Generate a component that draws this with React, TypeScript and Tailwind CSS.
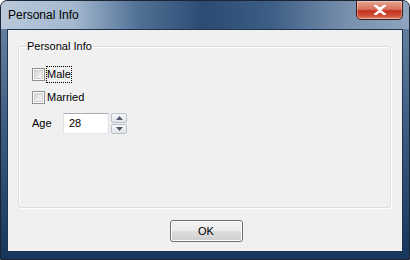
import * as React from "react";

const font = { fontFamily: '"Liberation Sans", Arial, sans-serif' };

const CheckBox: React.FC<{ label: string; focused?: boolean }> = ({ label, focused }) => (
  <div className="flex h-[17px] items-center gap-[1px]">
    <div className="h-[13px] w-[13px] border border-[#8e8f8f] bg-white p-[1px]">
      <div className="h-full w-full border border-[#d0d0d0] bg-gradient-to-br from-[#d6d6d6] to-[#f8f8f8]" />
    </div>
    <span
      className={
        "flex h-[17px] items-center px-0 text-[11px] leading-[13px] text-black " +
        (focused ? "border border-dotted border-black" : "border border-transparent")
      }
    >
      {label}
    </span>
  </div>
);

const SpinButton: React.FC<{ up?: boolean }> = ({ up }) => (
  <div className="flex h-[10px] w-[16px] items-center justify-center rounded-[2px] border border-[#b9c1cb] bg-gradient-to-b from-[#f7f8f9] to-[#e1e5ea]">
    <svg width="7" height="4" viewBox="0 0 7 4">
      {up ? <path d="M0 4 L3.5 0 L7 4 Z" fill="#4d5b6c" /> : <path d="M0 0 L3.5 4 L7 0 Z" fill="#4d5b6c" />}
    </svg>
  </div>
);

export default function App() {
  return (
    <div
      className="flex h-[260px] w-[410px] flex-col overflow-hidden rounded-t-[7px] border border-[#1c2633] bg-gradient-to-b from-[#6f89a6] via-[#3c5b80] to-[#17365c]"
      style={font}
    >
      {/* title bar */}
      <div className="relative flex h-[28px] items-center bg-[linear-gradient(90deg,#b9c9db_0%,#a3b8ce_18%,#4f6f95_34%,#2b4b72_50%,#3c5d84_66%,#7990ad_85%,#8ea4bf_100%)] pl-[7px]">
        <span className="text-[12px] leading-[14px] text-black">Personal Info</span>
        <div className="absolute right-[6px] top-[-1px] flex h-[20px] w-[47px] items-center justify-center rounded-b-[5px] border border-[#3b1f1c] bg-[linear-gradient(180deg,#e6a592_0%,#d7745e_45%,#c0321c_55%,#d2533a_85%,#e39479_100%)] shadow-[inset_0_0_0_1px_rgba(255,255,255,0.35)]">
          <svg width="12" height="10" viewBox="0 0 12 10">
            <path d="M1 0.5 L6 4 L11 0.5 M1 9.5 L6 6 L11 9.5 M2 1 L10 9 M10 1 L2 9" stroke="#ffffff" strokeWidth="2.4" fill="none" strokeLinecap="square" />
          </svg>
        </div>
      </div>

      {/* client area */}
      <div className="mx-[6px] mb-[7px] flex flex-1 flex-col border border-[#1e3450] bg-[#f0f0f0]">
        <fieldset className="ml-[10px] mt-[10px] h-[168px] w-[373px] rounded-[3px] border border-[#d5dfe5] pl-[7px] shadow-[inset_1px_1px_0_#ffffff,1px_1px_0_#ffffff]">
          <legend className="px-[1px] text-[11px] leading-[13px] text-black">Personal Info</legend>
          <div className="flex flex-col pl-[6px] pt-[13px]">
            <CheckBox label="Male" focused />
            <div className="mt-[6px]">
              <CheckBox label="Married" />
            </div>
            <div className="mt-[7px] flex items-center">
              <span className="w-[31px] text-[11px] leading-[13px] text-black">Age</span>
              <div className="flex h-[21px] w-[46px] items-center border border-[#abadb3] border-b-[#e3e9ef] border-l-[#e2e3ea] border-r-[#dbdfe6] bg-white pl-[5px] text-[11px] text-black">
                28
              </div>
              <div className="ml-[2px] flex flex-col gap-[1px]">
                <SpinButton up />
                <SpinButton />
              </div>
            </div>
          </div>
        </fieldset>

        <div className="mt-[12px] flex justify-center pl-[2px]">
          <button className="flex h-[22px] w-[73px] items-center justify-center rounded-[3px] border border-[#707070] bg-[linear-gradient(180deg,#f2f2f2_0%,#ebebeb_48%,#dddddd_52%,#cfcfcf_100%)] text-[11px] leading-[13px] text-black shadow-[inset_0_0_0_1px_#fcfcfc]">
            OK
          </button>
        </div>
      </div>
    </div>
  );
}
